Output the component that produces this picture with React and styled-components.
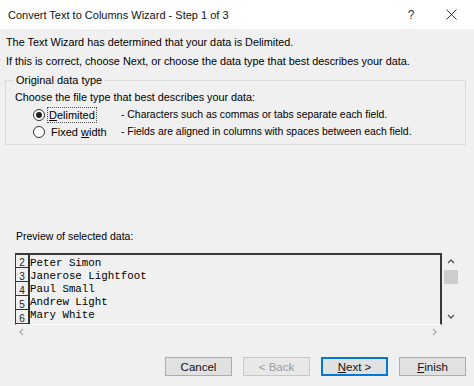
import React from 'react';
import styled, { createGlobalStyle } from 'styled-components';

const GlobalStyle = createGlobalStyle`
  html, body {
    margin: 0;
    background: #f0f0f0;
  }
  body {
    font-family: "Liberation Sans", Arial, sans-serif;
    font-size: 11px;
    color: #000;
  }
`;

const Dialog = styled.div`
  width: 474px;
  height: 386px;
  display: flex;
  flex-direction: column;
  background: #f0f0f0;
  overflow: hidden;
`;

const TitleBar = styled.div`
  height: 29px;
  flex: 0 0 29px;
  background: #fff;
  display: flex;
  align-items: center;
  padding-left: 8px;
`;

const Title = styled.div`
  flex: 1;
  font-size: 11px;
  color: #111;
`;

const TitleButton = styled.div`
  width: ${p => p.$w}px;
  display: flex;
  align-items: center;
  justify-content: center;
  font-size: 12px;
  color: #333;
`;

const Body = styled.div`
  display: flex;
  flex-direction: column;
  padding: 4px 8px 0 6px;
`;

const Line = styled.div`
  line-height: 19px;
  font-size: 10.85px;
  white-space: nowrap;
`;

const Group = styled.fieldset`
  margin: 1px 0 0 -1px;
  padding: 1px 0 4px 9px;
  border: 1px solid #dcdcdc;
  border-radius: 0;
  min-width: 0;
`;

const Legend = styled.legend`
  padding: 0 2px;
  margin-left: -1px;
  line-height: 16px;
`;

const Prompt = styled.div`
  line-height: 17px;
  font-size: 10.8px;
`;

const RadioRow = styled.div`
  display: flex;
  align-items: center;
  height: 17px;
  padding-left: 18px;
`;

const Radio = styled.span`
  width: 12px;
  height: 12px;
  flex: 0 0 12px;
  box-sizing: border-box;
  border-radius: 50%;
  border: 1px solid #333;
  background: #fff;
  display: flex;
  align-items: center;
  justify-content: center;
  &::after {
    content: '';
    display: ${p => (p.$checked ? 'block' : 'none')};
    width: 6px;
    height: 6px;
    border-radius: 50%;
    background: #222;
  }
`;

const RadioLabel = styled.span`
  width: 73px;
  margin-left: 3px;
  line-height: 14px;
  display: flex;
`;

const Description = styled.span`
  font-size: 10.4px;
  white-space: nowrap;
`;

const Focus = styled.span`
  outline: 1px dotted #555;
  outline-offset: 0;
  padding: 0 1px;
`;

const U = styled.span`
  text-decoration: underline;
`;

const PreviewLabel = styled.div`
  margin-top: 83px;
  padding-left: 10px;
  line-height: 16px;
  font-size: 10.5px;
`;

const PreviewWrap = styled.div`
  margin-top: 9px;
  margin-left: 9px;
  width: 444px;
  display: flex;
  flex-direction: column;
`;

const PreviewRow = styled.div`
  display: flex;
  height: 72px;
`;

const PreviewBox = styled.div`
  flex: 1;
  display: flex;
  box-sizing: border-box;
  border: 2px solid #3a3a3a;
  border-bottom: 1px solid #fff;
  border-left-width: 1px;
  background: #f0f0f0;
`;

const NumCol = styled.div`
  width: 12px;
  border-right: 2px solid #333;
  padding-top: 2px;
  display: flex;
  flex-direction: column;
`;

const NumCell = styled.div`
  height: 10px;
  margin-bottom: 3px;
  border-bottom: 1px solid #333;
  font-size: 10px;
  line-height: 12px;
  text-align: center;
  color: #222;
`;

const TextCol = styled.div`
  padding-top: 2px;
  font-family: "Liberation Mono", "Courier New", monospace;
  font-size: 10.8px;
  line-height: 13px;
  color: #000;
`;

const VScroll = styled.div`
  width: 16px;
  display: flex;
  flex-direction: column;
  align-items: center;
  padding-left: 1px;
`;

const Arrow = styled.div`
  height: ${p => p.$h}px;
  display: flex;
  align-items: center;
  justify-content: center;
`;

const Thumb = styled.div`
  width: 14px;
  height: 14px;
  background: #cdcdcd;
`;

const Spacer = styled.div`
  flex: 1;
`;

const HScroll = styled.div`
  height: 13px;
  width: 428px;
  display: flex;
  align-items: center;
  justify-content: space-between;
  padding: 0 4px 0 3px;
  box-sizing: border-box;
`;

const Buttons = styled.div`
  margin-top: 19px;
  display: flex;
  justify-content: flex-end;
  gap: 11px;
`;

const Button = styled.div`
  width: 67px;
  height: 19px;
  box-sizing: border-box;
  display: flex;
  align-items: center;
  justify-content: center;
  background: ${p => (p.$disabled ? '#e8e8e8' : '#e1e1e1')};
  border: ${p => (p.$default ? '2px solid #0078d7' : `1px solid ${p.$disabled ? '#c8c8c8' : '#adadad'}`)};
  color: ${p => (p.$disabled ? '#9a9a9a' : '#111')};
  font-size: 11.5px;
`;

const Chevron = ({ dir, color = '#555' }) => {
  const pts = {
    up: '1,5 4,2 7,5',
    down: '1,2 4,5 7,2',
    left: '5,1 2,4 5,7',
    right: '2,1 5,4 2,7',
  }[dir];
  return (
    <svg width="8" height="8" viewBox="0 0 8 8">
      <polyline points={pts} fill="none" stroke={color} strokeWidth="1.3" />
    </svg>
  );
};

const rows = ['Peter Simon', 'Janerose Lightfoot', 'Paul Small', 'Andrew Light', 'Mary White'];

export default function App() {
  return (
    <>
      <GlobalStyle />
      <Dialog>
        <TitleBar>
          <Title>Convert Text to Columns Wizard - Step 1 of 3</Title>
          <TitleButton $w={34}>?</TitleButton>
          <TitleButton $w={46}>
            <svg width="11" height="11" viewBox="0 0 11 11">
              <path d="M0.5 0.5 L10.5 10.5 M10.5 0.5 L0.5 10.5" stroke="#333" strokeWidth="1" />
            </svg>
          </TitleButton>
        </TitleBar>
        <Body>
          <Line>The Text Wizard has determined that your data is Delimited.</Line>
          <Line>If this is correct, choose Next, or choose the data type that best describes your data.</Line>
          <Group>
            <Legend>Original data type</Legend>
            <Prompt>Choose the file type that best describes your data:</Prompt>
            <RadioRow>
              <Radio $checked />
              <RadioLabel>
                <Focus><U>D</U>elimited</Focus>
              </RadioLabel>
              <Description>- Characters such as commas or tabs separate each field.</Description>
            </RadioRow>
            <RadioRow>
              <Radio />
              <RadioLabel>
                <span>&nbsp;Fixed <U>w</U>idth</span>
              </RadioLabel>
              <Description>- Fields are aligned in columns with spaces between each field.</Description>
            </RadioRow>
          </Group>
          <PreviewLabel>Preview of selected data:</PreviewLabel>
          <PreviewWrap>
            <PreviewRow>
              <PreviewBox>
                <NumCol>
                  {rows.map((_, i) => (
                    <NumCell key={i}>{i + 2}</NumCell>
                  ))}
                </NumCol>
                <TextCol>
                  {rows.map(r => (
                    <div key={r}>{r}</div>
                  ))}
                </TextCol>
              </PreviewBox>
              <VScroll>
                <Arrow $h={17}><Chevron dir="up" /></Arrow>
                <Thumb />
                <Spacer />
                <Arrow $h={16}><Chevron dir="down" /></Arrow>
              </VScroll>
            </PreviewRow>
            <HScroll>
              <Chevron dir="left" color="#b0b0b0" />
              <Chevron dir="right" color="#b0b0b0" />
            </HScroll>
          </PreviewWrap>
          <Buttons>
            <Button>Cancel</Button>
            <Button $disabled>&lt; Back</Button>
            <Button $default><span><U>N</U>ext &gt;</span></Button>
            <Button><span><U>F</U>inish</span></Button>
          </Buttons>
        </Body>
      </Dialog>
    </>
  );
}
